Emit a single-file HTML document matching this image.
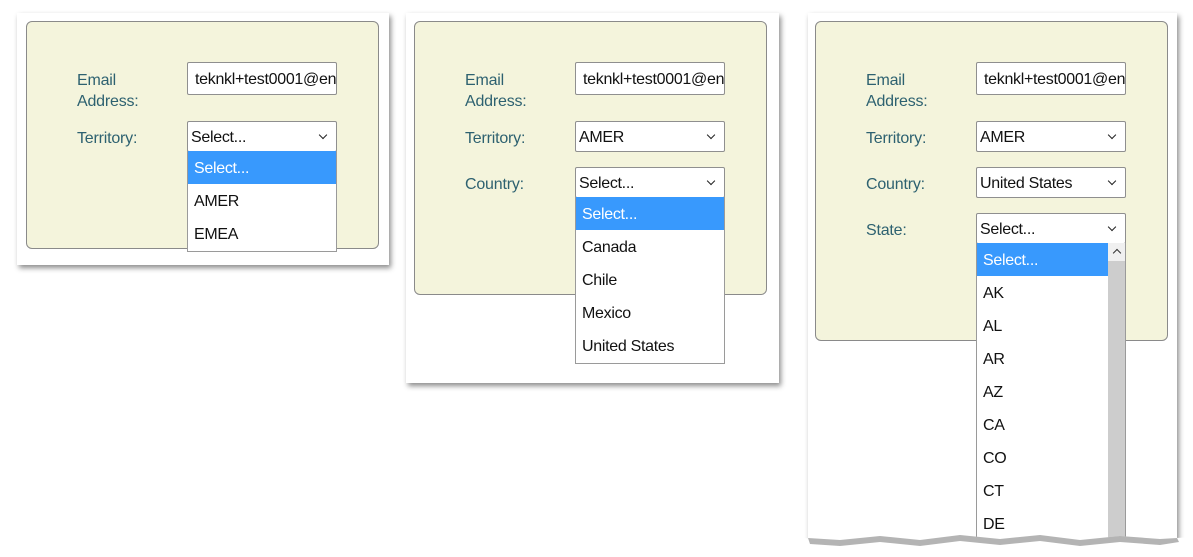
<!DOCTYPE html>
<html><head><style>
*{box-sizing:border-box;margin:0;padding:0}
body{width:1193px;height:557px;background:#fff;position:relative;overflow:hidden;font-family:"Liberation Sans",Arial,sans-serif;font-size:16px}
.card{position:absolute;background:#fff;box-shadow:2px 3px 5px rgba(0,0,0,.45)}
.in{position:absolute;background:#f4f4dc;border:1px solid #8a8a8a;border-radius:6px}
.lbl{position:absolute;color:#2d6170;font-size:16px;line-height:21px;letter-spacing:-0.2px}
.box{position:absolute;background:#fff;border:1px solid #8f8f8f;border-radius:2px;color:#111;font-size:16px;white-space:nowrap;overflow:hidden;letter-spacing:-0.3px}
.inp{height:33px;line-height:33px;padding-left:7px}
.sel{height:31px;line-height:31px;padding-left:3px}
.sel:after{content:"";position:absolute;right:10px;top:10px;width:5px;height:5px;border-right:1.6px solid #222;border-bottom:1.6px solid #222;transform:rotate(45deg)}
.dd{position:absolute;background:#fff;border:1px solid #9a9a9a;border-top:none;overflow:hidden}
.o{height:33px;line-height:36px;padding-left:6px;color:#111;letter-spacing:-0.3px}
.o.h{background:#3899fd;color:#fff}
</style></head><body>

<div class="card" style="left:17px;top:13px;width:372px;height:252px"></div>
<div class="in" style="left:26px;top:21px;width:353px;height:228px"></div>
<div class="lbl" style="left:77px;top:70px">Email<br>Address:</div>
<div class="box inp" style="left:187px;top:62px;width:150px">teknkl+test0001@en</div>
<div class="lbl" style="left:77px;top:128px">Territory:</div>
<div class="box sel" style="left:187px;top:121px;width:150px">Select...</div>
<div class="dd" style="left:187px;top:151px;width:150px;height:101px">
<div class="o h">Select...</div><div class="o">AMER</div><div class="o">EMEA</div></div>

<div class="card" style="left:406px;top:13px;width:373px;height:370px"></div>
<div class="in" style="left:414px;top:21px;width:353px;height:274px"></div>
<div class="lbl" style="left:465px;top:70px">Email<br>Address:</div>
<div class="box inp" style="left:575px;top:62px;width:150px">teknkl+test0001@en</div>
<div class="lbl" style="left:465px;top:128px">Territory:</div>
<div class="box sel" style="left:575px;top:121px;width:150px">AMER</div>
<div class="lbl" style="left:465px;top:174px">Country:</div>
<div class="box sel" style="left:575px;top:167px;width:150px">Select...</div>
<div class="dd" style="left:575px;top:197px;width:150px;height:167px">
<div class="o h">Select...</div><div class="o">Canada</div><div class="o">Chile</div><div class="o">Mexico</div><div class="o">United States</div></div>

<div class="card" style="left:808px;top:13px;width:369px;height:530px"></div>
<div class="in" style="left:815px;top:21px;width:353px;height:320px"></div>
<div class="lbl" style="left:866px;top:70px">Email<br>Address:</div>
<div class="box inp" style="left:976px;top:62px;width:150px">teknkl+test0001@en</div>
<div class="lbl" style="left:866px;top:128px">Territory:</div>
<div class="box sel" style="left:976px;top:121px;width:150px">AMER</div>
<div class="lbl" style="left:866px;top:174px">Country:</div>
<div class="box sel" style="left:976px;top:167px;width:150px">United States</div>
<div class="lbl" style="left:866px;top:220px">State:</div>
<div class="box sel" style="left:976px;top:213px;width:150px">Select...</div>
<div class="dd" style="left:976px;top:243px;width:150px;height:300px;border-bottom:none">
<div style="position:absolute;right:0;top:0;width:17px;height:300px;background:#cdcdcd"></div>
<div style="position:absolute;right:0;top:0;width:17px;height:18px;background:#f0f0f0"></div>
<div style="position:absolute;right:5px;top:7px;width:6px;height:6px;border-left:1.6px solid #333;border-top:1.6px solid #333;transform:rotate(45deg)"></div>
<div style="width:132px">
<div class="o h">Select...</div><div class="o">AK</div><div class="o">AL</div><div class="o">AR</div><div class="o">AZ</div><div class="o">CA</div><div class="o">CO</div><div class="o">CT</div><div class="o">DE</div></div></div>
<svg style="position:absolute;left:800px;top:530px" width="393" height="27"><path d="M0 0 L0 8 L40 10 L80 6 L120 10 L160 5 L200 9 L240 5 L280 10 L320 6 L360 9 L393 7 L393 27 L0 27Z" fill="#fff"/><path d="M8 8 L40 10 L80 6 L120 10 L160 5 L200 9 L240 5 L280 10 L320 6 L360 9 L377 8 L379 12 L360 15 L320 12 L280 16 L240 11 L200 15 L160 11 L120 16 L80 12 L40 16 L10 14Z" fill="#777" opacity=".55"/></svg>
</body></html>
